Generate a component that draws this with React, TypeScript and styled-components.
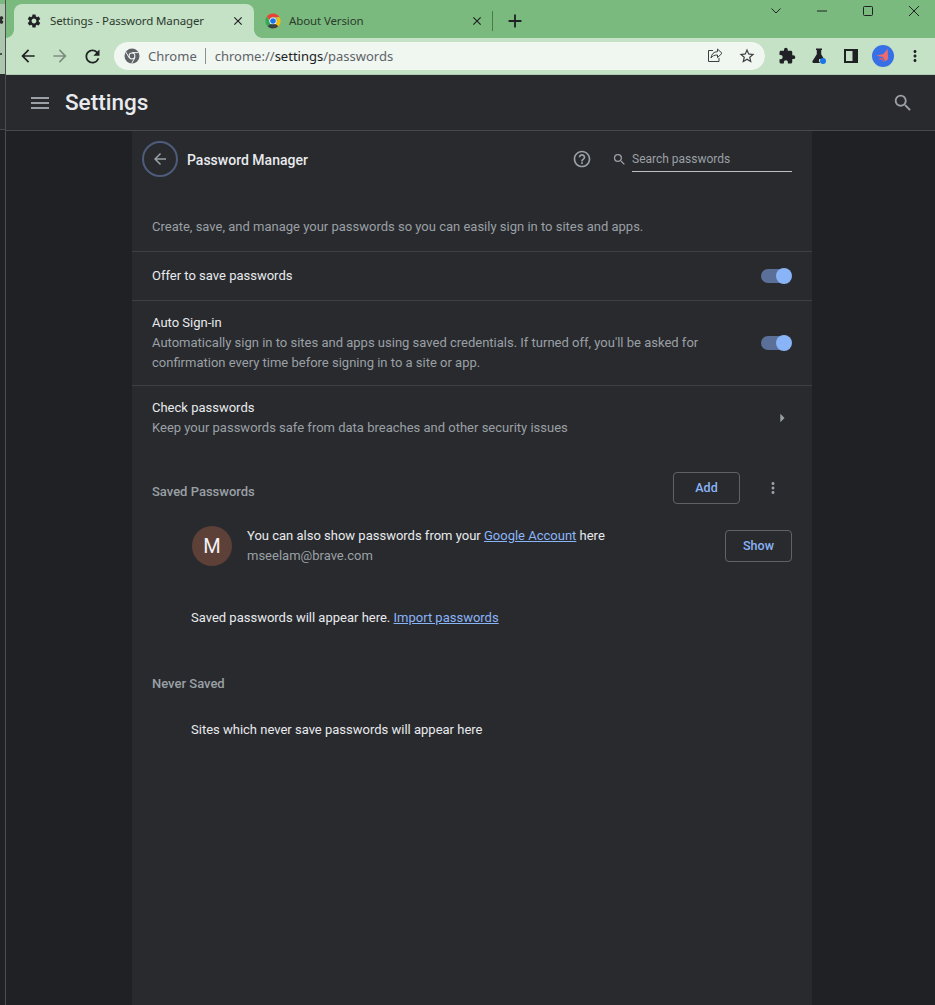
import React from 'react';
import styled, { createGlobalStyle } from 'styled-components';
import {
  MdAdd,
  MdArrowBack,
  MdArrowForward,
  MdArrowRight,
  MdClose,
  MdExtension,
  MdHelpOutline,
  MdMenu,
  MdMoreVert,
  MdRefresh,
  MdSearch,
  MdSettings,
  MdStarBorder,
} from 'react-icons/md';

const GlobalStyle = createGlobalStyle`
  html, body {
    margin: 0;
    padding: 0;
    height: 100%;
    overflow: hidden;
    background: #202124;
  }
  #root {
    height: 100%;
  }
  * {
    box-sizing: border-box;
  }
`;

const CHROME_FONT = `"Noto Sans", "Open Sans", sans-serif`;
const PAGE_FONT = `Roboto, "Liberation Sans", sans-serif`;

const Desktop = styled.div`
  display: flex;
  width: 935px;
  height: 1005px;
  overflow: hidden;
`;

const BehindWindow = styled.div`
  width: 6px;
  flex-shrink: 0;
  display: flex;
  flex-direction: column;
  overflow: hidden;
  border-right: 1px solid #4b4d50;
`;

const BehindTop = styled.div`
  height: 4px;
  background: #7aba7e;
`;

const BehindTab = styled.div`
  height: 70px;
  background: #acc7ae;
  color: #2a2b2d;
  display: flex;
  flex-direction: column;
  align-items: flex-end;
  padding-top: 9px;
  gap: 18px;
`;

const BehindPage = styled.div`
  flex: 1;
  background: #202124;
`;

const BehindHeader = styled.div`
  height: 56px;
  background: #292a2d;
  border-bottom: 1px solid #46484b;
`;

const Window = styled.div`
  flex: 1;
  min-width: 0;
  display: flex;
  flex-direction: column;
`;

const TabStrip = styled.div`
  height: 38px;
  flex-shrink: 0;
  background: #7aba7e;
  display: flex;
  align-items: flex-end;
  padding-left: 8px;
`;

const ActiveTab = styled.div`
  position: relative;
  width: 240px;
  height: 34px;
  background: #c5e1c6;
  border-radius: 8px 8px 0 0;
  display: flex;
  align-items: center;
  padding: 0 9px 0 12px;
  color: #202124;

  &::before,
  &::after {
    content: '';
    position: absolute;
    bottom: 0;
    width: 8px;
    height: 8px;
    background: radial-gradient(circle at 0 0, transparent 7.5px, #c5e1c6 8px);
  }
  &::before {
    left: -8px;
  }
  &::after {
    right: -8px;
    transform: scaleX(-1);
  }
`;

const InactiveTab = styled.div`
  width: 238px;
  height: 34px;
  display: flex;
  align-items: center;
  padding: 0 8px 0 11px;
  color: #202124;
`;

const TabTitle = styled.span`
  font-family: ${CHROME_FONT};
  font-size: 11.5px;
  letter-spacing: -0.12px;
  line-height: 16px;
  color: #2c3a2d;
  margin: 0 0 1px 8px;
  flex: 1;
  white-space: nowrap;
`;

const TabClose = styled.span`
  display: flex;
  color: #202124;
`;

const TabDivider = styled.div`
  width: 1px;
  height: 20px;
  background: #4c7a4f;
  margin: 0 0 7px 0;
`;

const NewTab = styled.div`
  display: flex;
  color: #202124;
  margin: 0 0 6px 11px;
`;

const WindowControls = styled.div`
  margin-left: auto;
  margin-right: -2px;
  align-self: flex-start;
  display: flex;
  align-items: center;
  height: 21px;
  color: #202124;
`;

const WindowControl = styled.div`
  width: 46px;
  height: 21px;
  display: flex;
  align-items: center;
  justify-content: center;
`;

const Toolbar = styled.div`
  height: 37px;
  flex-shrink: 0;
  background: #c5e1c6;
  border-bottom: 1px solid #aeccaf;
  display: flex;
  align-items: center;
  padding-left: 6px;
`;

const NavButton = styled.div<{ $dim?: boolean }>`
  width: 32px;
  height: 32px;
  display: flex;
  align-items: center;
  justify-content: center;
  color: ${(p) => (p.$dim ? '#7f8d80' : '#202124')};
`;

const Omnibox = styled.div`
  width: 651px;
  height: 28px;
  margin: 0 6px 0 6px;
  border-radius: 14px;
  background: #f0f6f0;
  display: flex;
  align-items: center;
  padding: 0 2px 0 10px;
  font-family: ${CHROME_FONT};
  font-size: 13px;
`;

const OriginChip = styled.span`
  color: #5f6368;
  margin-left: 8px;
  padding-right: 8px;
  border-right: 1px solid #8a8f93;
  line-height: 16px;
`;

const Url = styled.span`
  color: #5f6368;
  margin-left: 9px;
  flex: 1;
  white-space: nowrap;
`;

const UrlHost = styled.span`
  color: #202124;
`;

const OmniboxAction = styled.span`
  display: flex;
  width: 32px;
  justify-content: center;
  color: #3c4043;
`;

const SettingsHeader = styled.header`
  height: 56px;
  flex-shrink: 0;
  background: #292a2d;
  border-bottom: 1px solid #46484b;
  display: flex;
  align-items: center;
  padding: 0 21px 0 22px;
`;

const MenuIcon = styled.span`
  display: flex;
  color: #9aa0a6;
`;

const SettingsTitle = styled.h1`
  margin: 0 0 2px 13px;
  font-family: ${PAGE_FONT};
  font-size: 22.5px;
  font-weight: 500;
  color: #e8eaed;
  flex: 1;
`;

const HeaderSearch = styled.span`
  display: flex;
  color: #9aa0a6;
`;

const PageBody = styled.main`
  flex: 1;
  min-height: 0;
  background: #202124;
  padding-left: 126px;
`;

const Card = styled.section`
  width: 680px;
  height: 100%;
  background: #292a2d;
  font-family: ${PAGE_FONT};
  font-size: 13px;
  line-height: 20px;
  color: #e8eaed;
`;

const SubpageHeader = styled.div`
  height: 56px;
  display: flex;
  align-items: center;
  padding: 0 20px 0 10px;
`;

const BackButton = styled.div`
  width: 36px;
  height: 36px;
  border-radius: 50%;
  border: 2px solid #4d5c7a;
  color: #9aa0a6;
  display: flex;
  align-items: center;
  justify-content: center;
`;

const SubpageTitle = styled.h2`
  margin: 1px 0 0 9px;
  font-size: 14px;
  font-weight: 500;
  line-height: 20px;
  flex: 1;
`;

const HelpIcon = styled.span`
  display: flex;
  color: #9aa0a6;
  margin-right: 20px;
`;

const SearchBox = styled.div`
  display: flex;
  align-items: flex-start;
  height: 26px;
  margin-top: -3px;
`;

const SearchIcon = styled.span`
  display: flex;
  color: #9aa0a6;
  margin: 7px 5px 0 0;
`;

const SearchField = styled.div`
  width: 160px;
  height: 27px;
  border-bottom: 1px solid #bdc1c6;
  color: #9aa0a6;
  font-size: 12px;
  padding-top: 4px;
  line-height: 20px;
`;

const Description = styled.p`
  margin: 0;
  padding: 30px 20px 14px;
  color: #9aa0a6;
  line-height: 20px;
`;

const Row = styled.div<{ $height: number }>`
  min-height: ${(p) => p.$height}px;
  border-top: 1px solid #3f4042;
  display: flex;
  align-items: center;
  padding: 0 20px;
  gap: 20px;
`;

const RowText = styled.div`
  flex: 1;
`;

const RowLabel = styled.div`
  color: #e8eaed;
`;

const RowHint = styled.div`
  color: #9aa0a6;
`;

const Toggle = styled.div`
  position: relative;
  width: 30px;
  height: 14px;
  border-radius: 7px;
  background: #5b7099;
  margin: 0 1px 0 9px;
  flex-shrink: 0;

  &::after {
    content: '';
    position: absolute;
    right: -1px;
    top: -1px;
    width: 16px;
    height: 16px;
    border-radius: 50%;
    background: #8ab4f8;
  }
`;

const Chevron = styled.span`
  display: flex;
  color: #9aa0a6;
`;

const SectionHeader = styled.div`
  display: flex;
  align-items: center;
  padding: 22px 27px 0 20px;
  height: 54px;
`;

const SectionTitle = styled.h3`
  margin: 0;
  padding-top: 8px;
  font-size: 13px;
  line-height: 20px;
  font-weight: 500;
  color: #9aa0a6;
  flex: 1;
`;

const OutlineButton = styled.button`
  width: 67px;
  height: 32px;
  border: 1px solid #5f6368;
  border-radius: 4px;
  background: transparent;
  color: #8ab4f8;
  font-family: ${PAGE_FONT};
  font-size: 12.5px;
  font-weight: 500;
  padding: 0 0 2px;
`;

const MoreButton = styled.span`
  display: flex;
  color: #9aa0a6;
  margin: 0 0 0 21px;
  width: 24px;
  height: 32px;
  align-items: center;
  justify-content: center;
`;

const AccountRow = styled.div`
  display: flex;
  align-items: center;
  padding: 22px 20px 0 60px;
`;

const Avatar = styled.div`
  width: 40px;
  height: 40px;
  border-radius: 50%;
  background: #5d4037;
  color: #f1f3f4;
  font-size: 20px;
  display: flex;
  align-items: center;
  justify-content: center;
  flex-shrink: 0;
`;

const AccountText = styled.div`
  flex: 1;
  margin-left: 15px;
`;

const Link = styled.a`
  color: #8ab4f8;
  text-decoration: underline;
`;

const EmptyNote = styled.p<{ $top: number }>`
  margin: 0;
  padding: ${(p) => p.$top}px 20px 0 59px;
  color: #e8eaed;
`;

const NeverSaved = styled.div`
  padding: 38px 20px 0;
`;

const ChromeMonoIcon = () => (
  <svg width="16" height="16" viewBox="0 0 16 16">
    <circle cx="8" cy="8" r="7.5" fill="#5f6368" />
    <circle cx="8" cy="8" r="3.4" fill="#f0f6f0" />
    <circle cx="8" cy="8" r="2.4" fill="#5f6368" />
    <path d="M8 4.6h6.4M5.1 9.7 1.9 4.1M10.9 9.7l-3.2 5.6" stroke="#f0f6f0" strokeWidth="1" fill="none" />
  </svg>
);

const ChromeColorIcon = () => (
  <svg width="16" height="16" viewBox="0 0 16 16">
    <path d="M8 .5a7.5 7.5 0 0 1 6.5 3.75H8a3.75 3.75 0 0 0-3.6 2.7L1.9 3.6A7.5 7.5 0 0 1 8 .5z" fill="#ea4335" />
    <path d="M14.5 4.25A7.5 7.5 0 0 1 8 15.5l3.2-5.6a3.75 3.75 0 0 0 0-5.65z" fill="#fbbc04" />
    <path d="M8 15.5A7.5 7.5 0 0 1 1.9 3.6l3.25 6.3A3.75 3.75 0 0 0 9 11.6z" fill="#34a853" />
    <circle cx="8" cy="8" r="3.6" fill="#fff" />
    <circle cx="8" cy="8" r="2.8" fill="#1a73e8" />
    <path d="M2.6 13.2A7.5 7.5 0 0 0 13.4 13.2L11 11.2H5z" fill="#3c4043" />
  </svg>
);

const ShareIcon = () => (
  <svg width="16" height="16" viewBox="0 0 16 16" fill="none" stroke="currentColor" strokeWidth="1">
    <path d="M6 2.5H1.5v11h10.5v-3.5" />
    <path d="M10.5 1v2.6C6.5 3.8 4.5 6.2 4 10c1.4-2.2 3.3-3 6.5-3v2.6L15 5.3z" />
  </svg>
);

const FlaskIcon = () => (
  <svg width="18" height="18" viewBox="0 0 18 18">
    <path d="M6 1.5h6V3h-.8v4.2L14 12H9.2a3.4 3.4 0 0 0 .8 4H3.6c-1 0-1.6-1-1.1-1.9L6.8 7.2V3H6z" fill="#202124" />
    <circle cx="13" cy="14" r="3" fill="#1a73e8" />
  </svg>
);

const SidePanelIcon = () => (
  <svg width="14" height="14" viewBox="0 0 14 14">
    <path fillRule="evenodd" d="M0 0h14v14H0zM2 2v10h6.5V2z" fill="#202124" />
  </svg>
);

const ProfileAvatar = () => (
  <svg width="22" height="22" viewBox="0 0 22 22">
    <circle cx="11" cy="11" r="11" fill="#3770e6" />
    <path d="M15.5 3.8 16.2 14 13 16.5 11 12 4.3 10.8 11.5 9z" fill="#f26b6b" />
    <path d="M10.5 12.5 6 14l4 .8 2 3z" fill="#e85a6a" />
  </svg>
);

const ChevronDownIcon = () => (
  <svg width="10" height="6" viewBox="0 0 10 6" fill="none" stroke="#202124" strokeWidth="1">
    <path d="M.5.5 5 5 9.5.5" />
  </svg>
);

const MinimizeIcon = () => (
  <svg width="10" height="10" viewBox="0 0 10 10">
    <path d="M0 5h10" stroke="#202124" strokeWidth="1" />
  </svg>
);

const MaximizeIcon = () => (
  <svg width="10" height="10" viewBox="0 0 10 10" fill="none">
    <rect x=".5" y=".5" width="9" height="9" rx="1" stroke="#202124" />
  </svg>
);

const CloseWindowIcon = () => (
  <svg width="10" height="10" viewBox="0 0 10 10">
    <path d="M0 0l10 10M10 0 0 10" stroke="#202124" strokeWidth="1" />
  </svg>
);

export default function App() {
  return (
    <>
      <GlobalStyle />
      <Desktop>
        <BehindWindow>
          <BehindTop />
          <BehindTab>
            <MdSettings size={14} />
            <MdArrowBack size={18} />
          </BehindTab>
          <BehindPage>
            <BehindHeader />
          </BehindPage>
        </BehindWindow>
        <Window>
          <TabStrip>
            <ActiveTab>
              <MdSettings size={16} />
              <TabTitle>Settings - Password Manager</TabTitle>
              <TabClose>
                <MdClose size={14} />
              </TabClose>
            </ActiveTab>
            <InactiveTab>
              <ChromeColorIcon />
              <TabTitle>About Version</TabTitle>
              <TabClose>
                <MdClose size={14} />
              </TabClose>
            </InactiveTab>
            <TabDivider />
            <NewTab>
              <MdAdd size={22} />
            </NewTab>
            <WindowControls>
              <WindowControl>
                <ChevronDownIcon />
              </WindowControl>
              <WindowControl>
                <MinimizeIcon />
              </WindowControl>
              <WindowControl>
                <MaximizeIcon />
              </WindowControl>
              <WindowControl>
                <CloseWindowIcon />
              </WindowControl>
            </WindowControls>
          </TabStrip>
          <Toolbar>
            <NavButton>
              <MdArrowBack size={20} />
            </NavButton>
            <NavButton $dim>
              <MdArrowForward size={20} />
            </NavButton>
            <NavButton>
              <MdRefresh size={21} />
            </NavButton>
            <Omnibox>
              <ChromeMonoIcon />
              <OriginChip>Chrome</OriginChip>
              <Url>
                chrome://<UrlHost>settings</UrlHost>/passwords
              </Url>
              <OmniboxAction>
                <ShareIcon />
              </OmniboxAction>
              <OmniboxAction>
                <MdStarBorder size={18} />
              </OmniboxAction>
            </Omnibox>
            <NavButton>
              <MdExtension size={18} />
            </NavButton>
            <NavButton>
              <FlaskIcon />
            </NavButton>
            <NavButton>
              <SidePanelIcon />
            </NavButton>
            <NavButton>
              <ProfileAvatar />
            </NavButton>
            <NavButton>
              <MdMoreVert size={18} />
            </NavButton>
          </Toolbar>
          <SettingsHeader>
            <MenuIcon>
              <MdMenu size={24} />
            </MenuIcon>
            <SettingsTitle>Settings</SettingsTitle>
            <HeaderSearch>
              <MdSearch size={22} />
            </HeaderSearch>
          </SettingsHeader>
          <PageBody>
            <Card>
              <SubpageHeader>
                <BackButton>
                  <MdArrowBack size={18} />
                </BackButton>
                <SubpageTitle>Password Manager</SubpageTitle>
                <HelpIcon>
                  <MdHelpOutline size={20} />
                </HelpIcon>
                <SearchBox>
                  <SearchIcon>
                    <MdSearch size={15} />
                  </SearchIcon>
                  <SearchField>Search passwords</SearchField>
                </SearchBox>
              </SubpageHeader>
              <Description>
                Create, save, and manage your passwords so you can easily sign in to sites and apps.
              </Description>
              <Row $height={49}>
                <RowText>
                  <RowLabel>Offer to save passwords</RowLabel>
                </RowText>
                <Toggle />
              </Row>
              <Row $height={85}>
                <RowText>
                  <RowLabel>Auto Sign-in</RowLabel>
                  <RowHint>
                    Automatically sign in to sites and apps using saved credentials. If turned off, you'll be asked for
                    confirmation every time before signing in to a site or app.
                  </RowHint>
                </RowText>
                <Toggle />
              </Row>
              <Row $height={65}>
                <RowText>
                  <RowLabel>Check passwords</RowLabel>
                  <RowHint>Keep your passwords safe from data breaches and other security issues</RowHint>
                </RowText>
                <Chevron>
                  <MdArrowRight size={20} />
                </Chevron>
              </Row>
              <SectionHeader>
                <SectionTitle>Saved Passwords</SectionTitle>
                <OutlineButton>Add</OutlineButton>
                <MoreButton>
                  <MdMoreVert size={18} />
                </MoreButton>
              </SectionHeader>
              <AccountRow>
                <Avatar>M</Avatar>
                <AccountText>
                  <RowLabel>
                    You can also show passwords from your <Link>Google Account</Link> here
                  </RowLabel>
                  <RowHint>mseelam@brave.com</RowHint>
                </AccountText>
                <OutlineButton>Show</OutlineButton>
              </AccountRow>
              <EmptyNote $top={42}>
                Saved passwords will appear here. <Link>Import passwords</Link>
              </EmptyNote>
              <NeverSaved>
                <SectionTitle>Never Saved</SectionTitle>
              </NeverSaved>
              <EmptyNote $top={26}>Sites which never save passwords will appear here</EmptyNote>
            </Card>
          </PageBody>
        </Window>
      </Desktop>
    </>
  );
}
